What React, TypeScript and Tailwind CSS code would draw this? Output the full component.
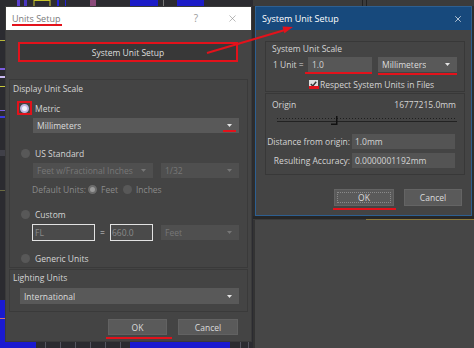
import React from 'react';
import { X } from 'lucide-react';

const Caret = ({ dim }: { dim?: boolean }) => (
  <svg width="5" height="3" viewBox="0 0 5 3" className="shrink-0">
    <polygon points="0,0 5,0 2.5,3" fill={dim ? '#767676' : '#e4e4e4'} />
  </svg>
);

const Radio = ({ on, dim }: { on?: boolean; dim?: boolean }) => {
  if (on) return <span className="w-[9px] h-[9px] rounded-full bg-[#f2f0fa] border-2 border-[#bdb6e0] shrink-0" />;
  if (dim) return <span className="w-[9px] h-[9px] rounded-full bg-[#9a9a9a] border-2 border-[#6c6c6c] shrink-0" />;
  return <span className="w-[9px] h-[9px] rounded-full bg-[#585858] shrink-0" />;
};

const Drop = ({ text, dim, className }: { text: string; dim?: boolean; className: string }) => (
  <div
    className={`relative flex items-center justify-between pl-[4px] pr-[7px] ${
      dim ? 'bg-[#4f4f4f] text-[#777777]' : 'bg-[#595959] text-[#dcdcdc]'
    } ${className}`}
  >
    <span className="truncate">{text}</span>
    <Caret dim={dim} />
  </div>
);

const Viewport = () => (
  <svg width="253" height="348" className="absolute inset-0">
    <rect width="253" height="348" fill="#2b2b30" />
    {/* top strip */}
    <rect x="17" y="0" width="3" height="6" fill="#5b3fd0" />
    <rect x="24" y="0" width="3" height="6" fill="#4a36c0" />
    <rect x="34" y="0.5" width="16" height="8" fill="none" stroke="#c9c62a" strokeWidth="1" />
    <rect x="57" y="0" width="2" height="6" fill="#2222d4" />
    <rect x="65" y="0" width="1" height="6" fill="#2222d4" />
    <rect x="90" y="0" width="6" height="6" fill="#8a4a7a" />
    <rect x="130" y="0" width="28" height="6" fill="#1c1cc8" />
    <rect x="163" y="0" width="1" height="6" fill="#777" />
    <rect x="177" y="0" width="27" height="6" fill="#1c1cc8" />
    {/* left strip */}
    <rect x="0" y="40" width="5" height="1" fill="#b8b838" />
    <rect x="0" y="68" width="5" height="2" fill="#7a5ae0" />
    <rect x="0" y="76" width="5" height="2" fill="#c8b8f0" />
    <rect x="0" y="86" width="5" height="1" fill="#c8c83a" />
    <rect x="0" y="110" width="5" height="1" fill="#7a5ae0" />
    <rect x="0" y="116" width="5" height="2" fill="#3a3ae0" />
    <rect x="0" y="150" width="5" height="6" fill="#404048" />
    <rect x="0" y="190" width="5" height="1" fill="#6a6a40" />
    <rect x="0" y="300" width="5" height="48" fill="#1a1ad0" />
    <rect x="0" y="318" width="5" height="1" fill="#d07070" />
    {/* bottom strip */}
    <rect x="0" y="342" width="36" height="6" fill="#1a1ad0" />
    <rect x="130" y="342" width="100" height="6" fill="#1a1ad0" />
    {[45, 60, 75, 90, 105, 120, 240, 248].map((x) => (
      <rect key={x} x={x} y="342" width="1" height="6" fill="#555560" />
    ))}
  </svg>
);

export default function App() {
  return (
    <div className="relative w-[474px] h-[348px] overflow-hidden flex bg-[#2b2b2b] font-['Open_Sans','Noto_Sans',sans-serif] text-[8.5px] leading-[11px] text-[#d4d4d4]">
      {/* background: viewport + command panel */}
      <div className="relative w-[253px] h-full shrink-0">
        <Viewport />
      </div>
      <div className="flex-1 flex flex-col">
        <div className="h-[6px] bg-[#3b3b3b] flex">
          <span className="ml-[109px] w-[1px] bg-[#222]" />
          <span className="ml-[3px] w-[1px] bg-[#222]" />
        </div>
        <div className="h-[210px] bg-[#2d2d2d]" />
        <div className="h-[3px] bg-[#262626]" />
        <div className="h-[1px] flex">
          <span className="w-[113px] bg-[#3a3a3a]" />
          <span className="flex-1 bg-[#8d7a3b]" />
        </div>
        <div className="flex-1 bg-[#464646] border-l-2 border-[#333333]" />
      </div>

      {/* Units Setup dialog */}
      <div className="absolute left-[5px] top-[6px] w-[247px] h-[336px] flex flex-col bg-[#444444] border border-[#3a3a3a]">
        <div className="h-[23px] shrink-0 bg-white flex items-center pl-[6px] pr-[13px]">
          <span className="text-[9px] leading-[11px] text-[#7a7a7a] pt-[1px] pr-[2px] border-b-2 border-[#e3121b]">
            Units Setup
          </span>
          <span className="ml-auto text-[10px] text-[#9a9a9a]">?</span>
          <X size={11} strokeWidth={1.3} className="ml-[29px] text-[#8a8a8a]" />
        </div>

        <div className="flex-1 flex flex-col px-[3px]">
          <div className="mt-[12px] ml-[9px] mr-[10px] h-[20px] border-2 border-[#e3121b] bg-[#383838] flex items-center justify-center text-[#dedede]">
            System Unit Setup
          </div>

          {/* Display Unit Scale */}
          <div className="mt-[17px] border border-[#3a3a3a] flex flex-col pb-[3px]">
            <div className="pt-[3px] pl-[3px]">Display Unit Scale</div>
            <div className="mt-[7px] ml-[7px] h-[14px] flex items-center">
              <span className="w-[15px] h-[14px] border-2 border-[#e3121b] flex items-center justify-center">
                <Radio on />
              </span>
              <span className="ml-[3px]">Metric</span>
            </div>
            <Drop text="Millimeters" className="mt-[3px] ml-[23px] mr-[8px] h-[15px]">
            </Drop>
            <div className="relative ml-[23px] mr-[8px]">
              <span className="absolute right-[3px] -top-[3px] w-[13px] h-[2px] bg-[#e3121b]" />
            </div>
            <div className="mt-[14px] ml-[11px] h-[12px] flex items-center">
              <Radio />
              <span className="ml-[5px]">US Standard</span>
            </div>
            <div className="mt-[4px] ml-[23px] mr-[8px] flex gap-[8px]">
              <Drop dim text="Feet w/Fractional Inches" className="w-[120px] h-[15px]" />
              <Drop dim text="1/32" className="flex-1 h-[15px]" />
            </div>
            <div className="mt-[5px] ml-[22px] h-[12px] flex items-center text-[#8a8a8a]">
              <span>Default Units:</span>
              <span className="ml-[2px] flex"><Radio dim /></span>
              <span className="ml-[4px]">Feet</span>
              <span className="ml-[5px] flex"><Radio /></span>
              <span className="ml-[4px]">Inches</span>
            </div>
            <div className="mt-[13px] ml-[11px] h-[12px] flex items-center">
              <Radio />
              <span className="ml-[5px]">Custom</span>
            </div>
            <div className="mt-[4px] ml-[22px] mr-[8px] h-[17px] flex items-center">
              <div className="w-[63px] h-[17px] border border-[#e2e2e2] bg-[#4a4a4a] pl-[2px] flex items-center text-[#8a8a8a]">
                FL
              </div>
              <span className="w-[15px] text-center text-[#cfcfcf]">=</span>
              <div className="w-[43px] h-[17px] border border-[#e2e2e2] bg-[#4a4a4a] pl-[1px] flex items-center text-[#8a8a8a]">
                660.0
              </div>
              <Drop dim text="Feet" className="ml-[8px] flex-1 h-[15px]" />
            </div>
            <div className="mt-[11px] ml-[11px] h-[12px] flex items-center">
              <Radio />
              <span className="ml-[5px]">Generic Units</span>
            </div>
          </div>

          {/* Lighting Units */}
          <div className="mt-[1px] border border-[#3a3a3a] flex flex-col pb-[7px]">
            <div className="pt-[2px] pl-[3px]">Lighting Units</div>
            <Drop text="International" className="mt-[5px] ml-[10px] mr-[8px] h-[16px]" />
          </div>

          <div className="mt-[7px] mr-[10px] flex justify-end gap-[11px]">
            <div className="relative w-[59px] h-[16px] bg-[#5a5a5a] border border-[#626262] flex items-center justify-center text-[#dcdcdc]">
              OK
              <span className="absolute -left-[3px] top-[17px] w-[66px] h-[2px] bg-[#e3121b]" />
            </div>
            <div className="w-[60px] h-[16px] bg-[#5a5a5a] border border-[#626262] flex items-center justify-center text-[#dcdcdc]">
              Cancel
            </div>
          </div>
        </div>
      </div>

      {/* System Unit Setup dialog */}
      <div className="absolute left-[255px] top-[6px] w-[217px] h-[210px] flex flex-col bg-[#444444] border border-[#2d5f91]">
        <div className="h-[23px] shrink-0 bg-[#17497c] flex items-center pl-[6px] pr-[8px] text-white text-[9px]">
          <span>System Unit Setup</span>
          <X size={10} strokeWidth={1.6} className="ml-auto text-white" />
        </div>

        <div className="flex-1 flex flex-col">
          <div className="mt-[11px] ml-[9px] w-[200px] border border-[#383838] flex flex-col pb-[2px]">
            <div className="pt-[1px] pl-[6px]">System Unit Scale</div>
            <div className="mt-[3px] h-[15px] pl-[7px] flex items-center">
              <span className="w-[35px]">1 Unit =</span>
              <div className="relative w-[64px] h-[15px] bg-[#575757] pl-[4px] flex items-center">
                1.0
                <span className="absolute -left-[3px] -bottom-[2px] w-[67px] h-[2px] bg-[#e3121b]" />
              </div>
              <div className="relative ml-[6px] w-[79px] h-[15px]">
                <Drop text="Millimeters" className="w-[79px] h-[15px]" />
                <span className="absolute left-0 -bottom-[3px] w-[79px] h-[2px] bg-[#e3121b]" />
              </div>
            </div>
            <div className="mt-[7px] h-[10px] pl-[43px] flex items-center">
              <span className="relative w-[9px] h-[9px] bg-[#dddddd] flex items-center justify-center">
                <svg width="7" height="6" viewBox="0 0 7 6">
                  <polyline points="0.8,3 2.8,5 6.2,0.8" fill="none" stroke="#333" strokeWidth="1.4" />
                </svg>
                <span className="absolute left-0 bottom-0 w-[10px] h-[3px] bg-[#e3121b]" />
              </span>
              <span className="ml-[2px]">Respect System Units in Files</span>
            </div>
          </div>

          <div className="mt-[1px] ml-[9px] w-[200px] border border-[#383838] flex flex-col pb-[6px]">
            <div className="pt-[5px] pl-[6px] pr-[8px] flex justify-between">
              <span>Origin</span>
              <span>16777215.0mm</span>
            </div>
            <svg width="198" height="12" className="mt-[4px]">
              {Array.from({ length: 60 }, (_, i) => (
                <rect key={i} x={11 + i * 3} y="4" width="1" height="1" fill="#1e1e1e" />
              ))}
              <rect x="11" y="7" width="180" height="1" fill="#222" />
              <rect x="70" y="2" width="1.5" height="9" fill="#111" />
              <rect x="65" y="9.5" width="6" height="1.5" fill="#111" />
            </svg>
            <div className="mt-[8px] h-[15px] flex items-center">
              <span className="w-[86px] text-right pr-[2px]">Distance from origin:</span>
              <div className="w-[103px] h-[15px] bg-[#545454] pl-[3px] flex items-center">1.0mm</div>
            </div>
            <div className="mt-[4px] h-[15px] flex items-center">
              <span className="w-[86px] text-right pr-[2px]">Resulting Accuracy:</span>
              <div className="w-[103px] h-[15px] bg-[#545454] pl-[3px] flex items-center">0.0000001192mm</div>
            </div>
          </div>

          <div className="mt-[14px] mr-[9px] flex justify-end gap-[10px]">
            <div className="relative w-[60px] h-[17px] bg-[#5a5a5a] border border-[#646464] flex items-center justify-center text-[#dcdcdc]">
              <span className="absolute inset-[2px] border border-dotted border-[#8a8a8a]" />
              OK
              <span className="absolute -left-[2px] top-[18px] w-[63px] h-[2px] bg-[#e3121b]" />
            </div>
            <div className="w-[58px] h-[17px] bg-[#5a5a5a] border border-[#646464] flex items-center justify-center text-[#dcdcdc]">
              Cancel
            </div>
          </div>
        </div>
      </div>

      {/* red annotation arrow */}
      <svg width="474" height="348" className="absolute inset-0 pointer-events-none">
        <line x1="207" y1="53" x2="285" y2="30" stroke="#e3121b" strokeWidth="2" />
        <polygon points="293,27 284.4,33.2 282.4,26.5" fill="#e3121b" />
      </svg>
    </div>
  );
}
